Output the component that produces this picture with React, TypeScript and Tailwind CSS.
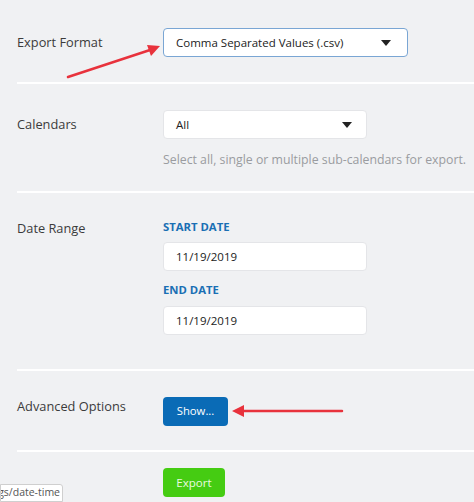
import React from 'react';

function Caret() {
  return (
    <svg width="10" height="6" viewBox="0 0 10 6" className="shrink-0">
      <path d="M0 0 H10 L5 6 Z" fill="#222" />
    </svg>
  );
}

function Row({ label, children, labelPad = 'pt-[5px]', className = '' }: { label?: string; children: React.ReactNode; labelPad?: string; className?: string }) {
  return (
    <div className={`flex ${className}`}>
      <div className={`w-[146px] shrink-0 text-[12.8px] leading-[18px] text-[#3b3b3b] ${labelPad}`}>{label}</div>
      <div className="flex flex-col">{children}</div>
    </div>
  );
}

export default function App() {
  return (
    <div
      className="relative w-[474px] h-[502px] overflow-hidden bg-[#f0f1f3]"
      style={{ fontFamily: '"Open Sans", "Noto Sans", sans-serif' }}
    >
      <div className="pl-[17px]">
        <Row label="Export Format" className="pt-[28px] pb-[25px] border-b-2 border-white">
          <div className="w-[245px] h-[29px] bg-white border border-[#7aa6d4] rounded-[4px] flex items-center justify-between pl-[12px] pr-[16px] text-[11.5px] text-[#222]">
            <span>Comma Separated Values (.csv)</span>
            <Caret />
          </div>
        </Row>

        <Row label="Calendars" className="pt-[26px] pb-[22px] border-b-2 border-white">
          <div className="w-[204px] h-[29px] bg-white border border-[#e4e5e8] rounded-[4px] flex items-center justify-between pl-[12px] pr-[14px] text-[11.5px] text-[#222]">
            <span>All</span>
            <Caret />
          </div>
          <div className="mt-[12px] text-[12.3px] leading-[18px] text-[#9a9ca0] whitespace-nowrap">
            Select all, single or multiple sub-calendars for export.
          </div>
        </Row>

        <Row label="Date Range" labelPad="pt-0" className="pt-[26px] pb-[34px] border-b-2 border-white">
          <div className="text-[11.3px] font-bold text-[#1a6fb4] leading-[16px]">START DATE</div>
          <div className="mt-[7px] w-[204px] h-[29px] bg-white border border-[#e4e5e8] rounded-[4px] flex items-center pl-[12px] text-[11.5px] text-[#222]">
            11/19/2019
          </div>
          <div className="mt-[11px] text-[11.3px] font-bold text-[#1a6fb4] leading-[16px]">END DATE</div>
          <div className="mt-[8px] w-[204px] h-[29px] bg-white border border-[#e4e5e8] rounded-[4px] flex items-center pl-[12px] text-[11.5px] text-[#222]">
            11/19/2019
          </div>
        </Row>

        <Row label="Advanced Options" labelPad="pt-0" className="pt-[26px] pb-[24px] border-b-2 border-white">
          <button className="w-[65px] h-[29px] bg-[#0a6bb6] rounded-[4px] text-white text-[11.3px]">Show...</button>
        </Row>

        <Row className="pt-[16px]">
          <button className="w-[62px] h-[29px] bg-[#45cc12] rounded-[4px] text-[#e8fbe0] text-[11.6px]">Export</button>
        </Row>
      </div>

      <svg className="absolute left-0 top-0 pointer-events-none" width="474" height="502">
        <line x1="68" y1="77" x2="150" y2="50" stroke="#e8323c" strokeWidth="2.5" strokeLinecap="round" />
        <path d="M160 46 L147 45 L151 56 Z" fill="#e8323c" />
        <line x1="342" y1="411" x2="240" y2="411" stroke="#e8323c" strokeWidth="2.5" strokeLinecap="round" />
        <path d="M232 411 L244 405 L244 417 Z" fill="#e8323c" />
      </svg>

      <div className="absolute left-0 bottom-0 h-[18px] w-[63px] bg-white border border-[#cfcfcf] rounded-tr-[3px] flex items-center justify-end pr-[2px] text-[10.5px] text-[#555] overflow-hidden whitespace-nowrap">
        gs/date-time
      </div>
    </div>
  );
}
